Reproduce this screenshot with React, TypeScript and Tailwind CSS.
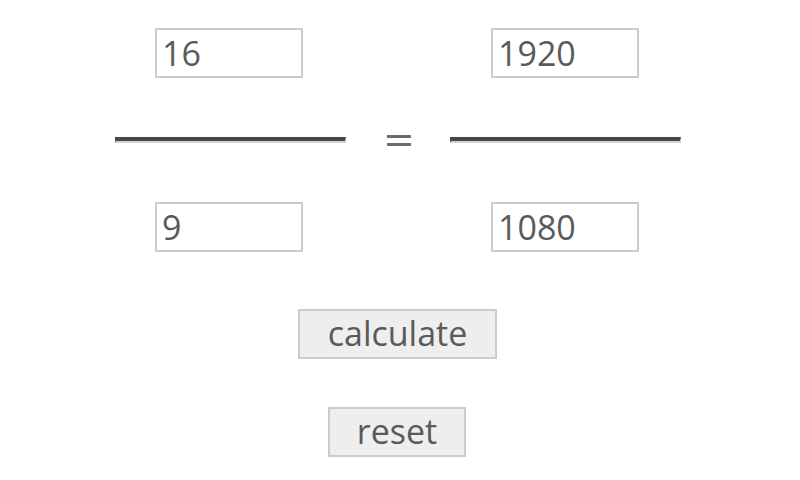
import React from "react";

const font = { fontFamily: '"Open Sans", "DejaVu Sans", sans-serif' };

function Box({ value, right }: { value: string; right?: boolean }) {
  return (
    <div className={(right ? "mr-[1px] " : "mr-[3px] ") + "w-[148px] h-[50px] border-2 border-[#cccccc] bg-white flex items-center pl-[5px] pb-[1px] text-[34px] font-medium leading-none text-[#5a5a5a]"}>
      {value}
    </div>
  );
}

function Bar() {
  return <div className="w-[231px] h-[6px] border-t-[4px] border-t-[#474747] border-b-[2px] border-b-[#d2d2d2] border-l border-l-[#555] border-r border-r-[#ddd]" />;
}

export default function App() {
  return (
    <div className="w-[800px] h-[480px] bg-white flex flex-col items-center" style={font}>
      <div className="flex pt-[28px] pl-[115px] w-full">
        <div className="flex flex-col items-center w-[231px]">
          <Box value="16" />
          <div className="h-[59px]" />
          <Bar />
          <div className="h-[59px]" />
          <Box value="9" />
        </div>
        <div className="w-[104px] flex justify-center pt-[92px] pl-[2px] text-[38px] leading-none text-[#6a6a6a]" style={{ fontFamily: '"DejaVu Sans", sans-serif' }}>
          =
        </div>
        <div className="flex flex-col items-center w-[231px]">
          <Box value="1920" right />
          <div className="h-[59px]" />
          <Bar />
          <div className="h-[59px]" />
          <Box value="1080" right />
        </div>
      </div>
      <button className="mt-[57px] ml-[-5px] w-[199px] h-[50px] bg-[#eeeeee] border-2 border-[#cccccc] text-[34px] font-medium leading-none text-[#5a5a5a] flex items-center justify-center pb-[3px]">
        calculate
      </button>
      <button className="mt-[48px] ml-[-6px] w-[138px] h-[50px] bg-[#eeeeee] border-2 border-[#cccccc] text-[34px] font-medium leading-none text-[#5a5a5a] flex items-center justify-center pb-[3px]">
        reset
      </button>
    </div>
  );
}
